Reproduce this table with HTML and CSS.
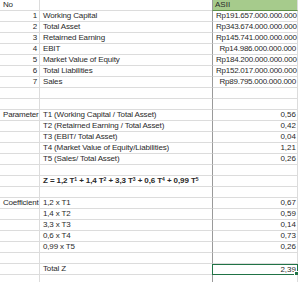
FILE: index.html
```html
<!DOCTYPE html>
<html>
<head>
<meta charset="utf-8">
<link rel="stylesheet" href="styles.css">
</head>
<body>
<div class="sheet">
  <div class="c a">No</div><div class="c b"></div><div class="c k hdr">ASII</div>
  <div class="c a r">1</div><div class="c b">Working Capital</div><div class="c k r num">Rp191.657.000.000.000</div>
  <div class="c a r">2</div><div class="c b">Total Asset</div><div class="c k r num">Rp343.674.000.000.000</div>
  <div class="c a r">3</div><div class="c b">Retairned Earning</div><div class="c k r num">Rp145.741.000.000.000</div>
  <div class="c a r">4</div><div class="c b">EBIT</div><div class="c k r num">Rp14.986.000.000.000</div>
  <div class="c a r">5</div><div class="c b">Market Value of Equity</div><div class="c k r num">Rp184.200.000.000.000</div>
  <div class="c a r">6</div><div class="c b">Total Liabilities</div><div class="c k r num">Rp152.017.000.000.000</div>
  <div class="c a r">7</div><div class="c b">Sales</div><div class="c k r num">Rp89.795.000.000.000</div>
  <div class="c a"></div><div class="c b"></div><div class="c k"></div>
  <div class="c a"></div><div class="c b"></div><div class="c k"></div>
  <div class="c a">Parameter</div><div class="c b">T1 (Working Capital / Total Asset)</div><div class="c k r">0,56</div>
  <div class="c a"></div><div class="c b">T2 (Retairned Earning / Total Asset)</div><div class="c k r">0,42</div>
  <div class="c a"></div><div class="c b">T3 (EBIT/ Total Asset)</div><div class="c k r">0,04</div>
  <div class="c a"></div><div class="c b">T4 (Market Value of Equity/Liabilities)</div><div class="c k r">1,21</div>
  <div class="c a"></div><div class="c b">T5 (Sales/ Total Asset)</div><div class="c k r">0,26</div>
  <div class="c a"></div><div class="c b"></div><div class="c k"></div>
  <div class="c a"></div><div class="c b formula">Z = 1,2 T<sup>1</sup> + 1,4 T<sup>2</sup> + 3,3 T<sup>3</sup> + 0,6 T<sup>4</sup> + 0,99 T<sup>5</sup></div><div class="c k"></div>
  <div class="c a"></div><div class="c b"></div><div class="c k"></div>
  <div class="c a">Coefficient</div><div class="c b">1,2 x T1</div><div class="c k r">0,67</div>
  <div class="c a"></div><div class="c b">1,4 x T2</div><div class="c k r">0,59</div>
  <div class="c a"></div><div class="c b">3,3 x T3</div><div class="c k r">0,14</div>
  <div class="c a"></div><div class="c b">0,6 x T4</div><div class="c k r">0,73</div>
  <div class="c a"></div><div class="c b">0,99 x T5</div><div class="c k r">0,26</div>
  <div class="c a"></div><div class="c b"></div><div class="c k"></div>
  <div class="c a"></div><div class="c b">Total Z</div><div class="c k r sel">2,39<span class="handle"></span></div>
  <div class="c a"></div><div class="c b"></div><div class="c k"></div>
</div>
</body>
</html>
```
FILE: styles.css
```css
html, body {
  margin: 0;
  padding: 0;
  background: #ffffff;
}
.sheet {
  display: grid;
  grid-template-columns: 40px 172px 86px;
  grid-auto-rows: 11px;
  font-family: "Liberation Sans", Arial, sans-serif;
  font-size: 8px;
  color: #2a2a2a;
  width: 298px;
}
.c {
  box-sizing: border-box;
  border-bottom: 1px solid #dcdcdc;
  line-height: 10px;
  padding: 0 2px 0 3px;
  white-space: nowrap;
  overflow: visible;
  position: relative;
}
.a {
  border-right: 1px solid #dcdcdc;
  letter-spacing: -0.2px;
}
.b {
  padding-left: 3px;
  letter-spacing: -0.15px;
}
.k {
  border-left: 1px solid #9a9a9a;
  border-right: 1px solid #dcdcdc;
  padding-right: 1px;
}
.num {
  letter-spacing: -0.25px;
}
.r {
  text-align: right;
}
.hdr {
  background: #a6cb8c;
  border-bottom: 1px solid #5d8f46;
  padding-left: 2px;
}
.formula {
  font-weight: bold;
  font-size: 8px;
  letter-spacing: -0.1px;
}
.formula sup {
  font-size: 5px;
  vertical-align: 2px;
  line-height: 0;
}
.sel {
  border: 1px solid #217346;
  border-left: 1px solid #217346;
}
.handle {
  position: absolute;
  right: -2px;
  bottom: -2px;
  width: 3px;
  height: 3px;
  background: #217346;
  border: 1px solid #ffffff;
  box-sizing: content-box;
}
```
